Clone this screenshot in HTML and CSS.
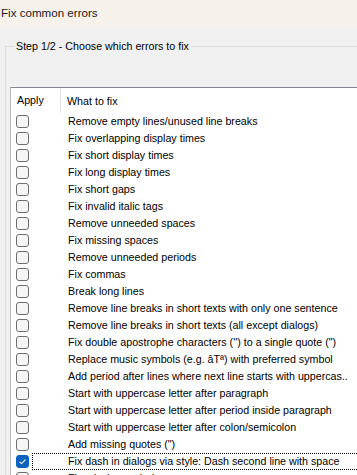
FILE: index.html
```html
<!DOCTYPE html>
<html lang="en">
<head>
  <meta charset="UTF-8">
  <title>Fix common errors</title>
  <link rel="stylesheet" href="styles.css">
</head>
<body>
  <div class="titlebar">Fix common errors</div>

  <div class="content">
    <fieldset class="group">
      <legend>Step 1/2 - Choose which errors to fix</legend>

      <div class="list">
        <div class="list-head">
          <div class="col-apply">Apply</div>
          <div class="col-what">What to fix</div>
        </div>

        <div class="row"><span class="check"></span><span class="label">Remove empty lines/unused line breaks</span></div>
        <div class="row"><span class="check"></span><span class="label">Fix overlapping display times</span></div>
        <div class="row"><span class="check"></span><span class="label">Fix short display times</span></div>
        <div class="row"><span class="check"></span><span class="label">Fix long display times</span></div>
        <div class="row"><span class="check"></span><span class="label">Fix short gaps</span></div>
        <div class="row"><span class="check"></span><span class="label">Fix invalid italic tags</span></div>
        <div class="row"><span class="check"></span><span class="label">Remove unneeded spaces</span></div>
        <div class="row"><span class="check"></span><span class="label">Fix missing spaces</span></div>
        <div class="row"><span class="check"></span><span class="label">Remove unneeded periods</span></div>
        <div class="row"><span class="check"></span><span class="label">Fix commas</span></div>
        <div class="row"><span class="check"></span><span class="label">Break long lines</span></div>
        <div class="row"><span class="check"></span><span class="label">Remove line breaks in short texts with only one sentence</span></div>
        <div class="row"><span class="check"></span><span class="label">Remove line breaks in short texts (all except dialogs)</span></div>
        <div class="row"><span class="check"></span><span class="label">Fix double apostrophe characters ('') to a single quote (")</span></div>
        <div class="row"><span class="check"></span><span class="label">Replace music symbols (e.g. âTª) with preferred symbol</span></div>
        <div class="row"><span class="check"></span><span class="label">Add period after lines where next line starts with uppercas..</span></div>
        <div class="row"><span class="check"></span><span class="label">Start with uppercase letter after paragraph</span></div>
        <div class="row"><span class="check"></span><span class="label">Start with uppercase letter after period inside paragraph</span></div>
        <div class="row"><span class="check"></span><span class="label">Start with uppercase letter after colon/semicolon</span></div>
        <div class="row"><span class="check"></span><span class="label">Add missing quotes (")</span></div>
        <div class="row selected">
          <span class="check checked">
            <svg width="13" height="13" viewBox="0 0 13 13"><path d="M3.5 6.8 L5.5 8.6 L9.5 4.6" fill="none" stroke="#fff" stroke-width="1.1"/></svg>
          </span>
          <span class="label focus">Fix dash in dialogs via style: Dash second line with space</span>
        </div>
        <div class="row"><span class="check"></span><span class="label">Fix missing periods</span></div>
      </div>
    </fieldset>
  </div>
</body>
</html>
```

FILE: styles.css
```css
* { margin: 0; padding: 0; box-sizing: border-box; }
html, body { height: 100%; overflow: hidden; }
body {
  font-family: Tahoma, "Liberation Sans", sans-serif;
  font-size: 10.7px;
  color: #000;
  background: #f0f0f0;
}

.titlebar {
  height: 27px;
  line-height: 25px;
  padding-left: 1px;
  font-size: 11.6px;
  background: #f7f1ec;
  color: #1a1a1a;
}

.content {
  padding: 12px 0 0 5px;
}

.group {
  width: 420px;
  border: 1px solid #dcdcdc;
  border-right: none;
  border-bottom: none;
  padding: 34px 0 0 4px;
}

.group legend {
  margin-left: 5px;
  padding: 0 2px 0 1px;
  line-height: 14px;
  color: #000;
}

.list {
  background: #fff;
  border-top: 1px solid #828790;
  border-left: 1px solid #b9b9b9;
}

.list-head {
  display: flex;
  height: 25px;
  align-items: center;
}

.col-apply {
  width: 50px;
  padding-left: 6px;
  border-right: 1px solid #e5e5e5;
  height: 25px;
  line-height: 25px;
}

.col-what {
  padding-left: 6px;
}

.row {
  display: flex;
  align-items: center;
  height: 17px;
}

.check {
  width: 13px;
  height: 13px;
  margin-left: 5px;
  margin-right: 3px;
  border: 1px solid #6e6e6e;
  border-radius: 3px;
  background: #f6f6f6;
  flex: none;
}

.check.checked {
  background: #0a62be;
  border-color: #0a62be;
}

.check svg { display: block; margin: -1px; }

.label {
  flex: 1;
  padding-left: 36px;
  white-space: nowrap;
  height: 17px;
  line-height: 17px;
}

.label.focus {
  border: 1px dotted #000;
  border-right: none;
  padding-left: 35px;
  line-height: 15px;
}
```
